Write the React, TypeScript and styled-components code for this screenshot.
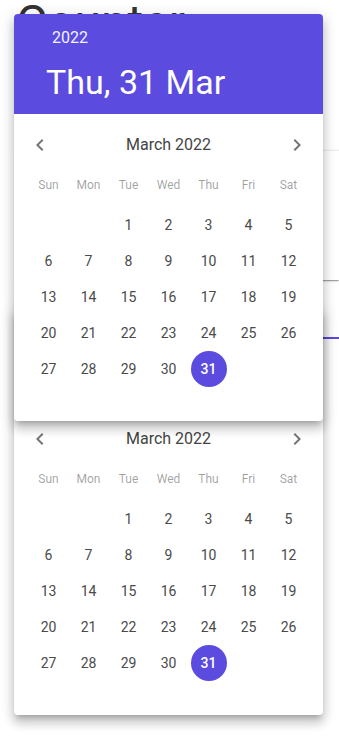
import React from "react";
import styled, { createGlobalStyle, css } from "styled-components";

const PURPLE = "#5b4bdf";

const Global = createGlobalStyle`
  html, body { margin: 0; padding: 0; background: #fff; }
  body { font-family: Roboto, "Noto Sans", "Liberation Sans", sans-serif; -webkit-font-smoothing: antialiased; }
  * { box-sizing: border-box; }
`;

const Page = styled.div`
  position: relative;
  width: 339px;
  height: 739px;
  overflow: hidden;
  padding: 0 16px;
`;

const Heading = styled.h1`
  margin: -5px 0 0;
  font-size: 48px;
  line-height: 56px;
  font-weight: 400;
  color: #333;
`;

const Card = styled.div`
  margin: 99px -16px 0 0;
  height: 130px;
  background: #fff;
  border-top: 1px solid #ececec;
  box-shadow: 0 2px 1px -1px rgba(0, 0, 0, 0.2), 0 1px 1px 0 rgba(0, 0, 0, 0.14),
    0 1px 3px 0 rgba(0, 0, 0, 0.12);
`;

const Field = styled.div`
  margin: 37px -16px 0 0;
  height: 22px;
  border-bottom: 2px solid ${PURPLE};
`;

const Popup = styled.div<{ $top: number }>`
  position: absolute;
  left: 14px;
  top: ${(p) => p.$top}px;
  width: 309px;
  background: #fff;
  border-radius: 4px;
  overflow: hidden;
  box-shadow: 0 5px 5px -3px rgba(0, 0, 0, 0.2), 0 8px 10px 1px rgba(0, 0, 0, 0.14),
    0 3px 14px 2px rgba(0, 0, 0, 0.12);
`;

const Toolbar = styled.div`
  height: 100px;
  background: ${PURPLE};
  padding: 10px 0 0 32px;
  display: flex;
  flex-direction: column;
  align-items: flex-start;
`;

const Year = styled.div`
  margin-left: 6px;
  font-size: 16px;
  line-height: 28px;
  color: rgba(255, 255, 255, 0.95);
`;

const DateTitle = styled.div`
  margin-top: 9px;
  font-size: 34px;
  line-height: 42px;
  color: #fff;
`;

const Body = styled.div`
  padding-top: 7px;
`;

const MonthRow = styled.div`
  height: 48px;
  padding: 0 2px;
  display: flex;
  align-items: center;
  justify-content: space-between;
`;

const NavButton = styled.button`
  width: 48px;
  height: 48px;
  padding: 12px;
  border: none;
  background: none;
  display: flex;
  align-items: center;
  justify-content: center;
  color: rgba(0, 0, 0, 0.54);
`;

const MonthLabel = styled.div`
  font-size: 16px;
  line-height: 24px;
  color: #444;
`;

const sevenCols = css`
  display: grid;
  grid-template-columns: repeat(7, 40px);
  justify-content: center;
`;

const WeekRow = styled.div`
  ${sevenCols};
  height: 32px;
  align-items: center;
`;

const WeekLabel = styled.span`
  text-align: center;
  font-size: 12px;
  color: rgba(0, 0, 0, 0.38);
`;

const DaysGrid = styled.div`
  ${sevenCols};
  margin-top: 6px;
  height: 214px;
  grid-auto-rows: 36px;
  align-content: start;
`;

const Day = styled.div<{ $selected?: boolean }>`
  width: 36px;
  height: 36px;
  justify-self: center;
  border-radius: 50%;
  display: flex;
  align-items: center;
  justify-content: center;
  font-size: 14px;
  color: #4a4a4a;
  ${(p) =>
    p.$selected &&
    css`
      background: ${PURPLE};
      color: #fff;
      font-weight: 500;
    `}
`;

const Chevron = ({ dir }: { dir: "left" | "right" }) => (
  <svg width="24" height="24" viewBox="0 0 24 24" fill="currentColor">
    {dir === "left" ? (
      <path d="M15.41 7.41L14 6l-6 6 6 6 1.41-1.41L10.83 12z" />
    ) : (
      <path d="M10 6L8.59 7.41 13.17 12l-4.58 4.59L10 18l6-6z" />
    )}
  </svg>
);

const WEEK = ["Sun", "Mon", "Tue", "Wed", "Thu", "Fri", "Sat"];
const OFFSET = 2;
const DAYS = Array.from({ length: 31 }, (_, i) => i + 1);

const DatePicker = ({ top }: { top: number }) => (
  <Popup $top={top}>
    <Toolbar>
      <Year>2022</Year>
      <DateTitle>Thu, 31 Mar</DateTitle>
    </Toolbar>
    <Body>
      <MonthRow>
        <NavButton aria-label="previous month">
          <Chevron dir="left" />
        </NavButton>
        <MonthLabel>March 2022</MonthLabel>
        <NavButton aria-label="next month">
          <Chevron dir="right" />
        </NavButton>
      </MonthRow>
      <WeekRow>
        {WEEK.map((w) => (
          <WeekLabel key={w}>{w}</WeekLabel>
        ))}
      </WeekRow>
      <DaysGrid>
        {Array.from({ length: OFFSET }, (_, i) => (
          <span key={`e${i}`} />
        ))}
        {DAYS.map((d) => (
          <Day key={d} $selected={d === 31}>
            {d}
          </Day>
        ))}
      </DaysGrid>
    </Body>
  </Popup>
);

export default function App() {
  return (
    <Page>
      <Global />
      <Heading>Counter</Heading>
      <Card />
      <Field />
      <DatePicker top={308} />
      <DatePicker top={14} />
    </Page>
  );
}
